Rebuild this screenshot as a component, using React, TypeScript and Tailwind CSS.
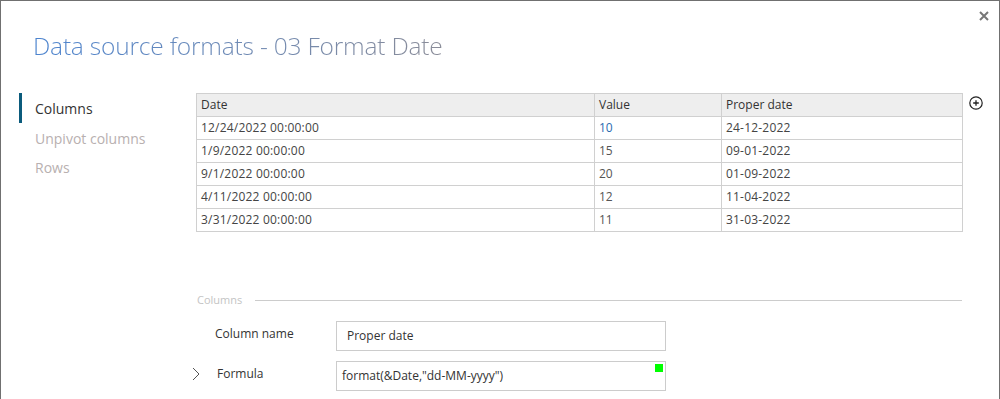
import React from "react";

const rows = [
  { date: "12/24/2022 00:00:00", value: "10", proper: "24-12-2022" },
  { date: "1/9/2022 00:00:00", value: "15", proper: "09-01-2022" },
  { date: "9/1/2022 00:00:00", value: "20", proper: "01-09-2022" },
  { date: "4/11/2022 00:00:00", value: "12", proper: "11-04-2022" },
  { date: "3/31/2022 00:00:00", value: "11", proper: "31-03-2022" },
];

const font = { fontFamily: '"Open Sans", "Noto Sans", sans-serif' };

function CloseIcon() {
  return (
    <svg width="10" height="10" viewBox="0 0 10 10" className="text-[#777]">
      <path d="M1 1 L9 9 M9 1 L1 9" stroke="currentColor" strokeWidth="2" />
    </svg>
  );
}

function PlusCircle() {
  return (
    <svg width="14" height="14" viewBox="0 0 14 14">
      <circle cx="7" cy="7" r="6.2" fill="none" stroke="#222" strokeWidth="1.2" />
      <path d="M7 4.2 V9.8 M4.2 7 H9.8" stroke="#222" strokeWidth="1.3" />
    </svg>
  );
}

function Chevron() {
  return (
    <svg width="8" height="14" viewBox="0 0 8 14">
      <path d="M1 1 L7 7 L1 13" fill="none" stroke="#555" strokeWidth="1" />
    </svg>
  );
}

export default function App() {
  return (
    <div
      className="relative w-[1000px] h-[399px] bg-white border-t border-l border-r border-[#707070] overflow-hidden text-[#333]"
      style={font}
    >
      <button className="absolute right-[10px] top-[10px]">
        <CloseIcon />
      </button>

      <div className="h-[92px] pl-[32px] pt-[28px]">
        <h1 className="text-[24.5px] leading-[34px] font-light tracking-[-0.2px] bg-gradient-to-r from-[#4c84cf] to-[#8a8c98] bg-clip-text text-transparent inline-block">
          Data source formats - 03 Format Date
        </h1>
      </div>

      <div className="flex">
        <nav className="w-[195px] pl-[18px] flex flex-col">
          <div className="flex items-center h-[30px]">
            <div className="w-[3px] h-[30px] bg-[#0b5b7c]" />
            <span className="ml-[13px] text-[14px] text-[#333]">Columns</span>
          </div>
          <span className="ml-[16px] mt-[1px] h-[30px] leading-[30px] text-[14px] text-[#b8b0b0]">
            Unpivot columns
          </span>
          <span className="ml-[16px] h-[30px] leading-[28px] text-[14px] text-[#b8b0b0]">Rows</span>
        </nav>

        <div className="flex flex-col">
          <div className="flex">
            <table className="w-[766px] border-collapse text-[12px] table-fixed">
              <colgroup>
                <col className="w-[398px]" />
                <col className="w-[127px]" />
                <col className="w-[241px]" />
              </colgroup>
              <thead>
                <tr className="bg-[#eeeeee] h-[23px]">
                  <th className="border border-[#d0d0d0] text-left font-normal px-[4px]">Date</th>
                  <th className="border border-[#d0d0d0] text-left font-normal px-[4px]">Value</th>
                  <th className="border border-[#d0d0d0] text-left font-normal px-[4px]">Proper date</th>
                </tr>
              </thead>
              <tbody>
                {rows.map((r, i) => (
                  <tr key={r.date} className="h-[23px]">
                    <td className="border border-[#d0d0d0] px-[4px] text-[#444] tracking-[0.2px]">{r.date}</td>
                    <td
                      className={
                        i === 0
                          ? "border border-[#d0d0d0] px-[4px] text-[#2a6bb0]"
                          : "border border-[#d0d0d0] px-[4px] text-[#555]"
                      }
                    >
                      {r.value}
                    </td>
                    <td className="border border-[#d0d0d0] px-[4px] text-[#444] tracking-[0.2px]">{r.proper}</td>
                  </tr>
                ))}
              </tbody>
            </table>
            <div className="ml-[6px] mt-[3px]">
              <PlusCircle />
            </div>
          </div>

          <div className="mt-[60px] flex items-center w-[766px]">
            <span className="text-[11px] text-[#c4c4c4] pl-[1px]">Columns</span>
            <div className="flex-1 ml-[13px] h-px bg-[#cccccc]" />
          </div>

          <div className="mt-[12px] flex items-center h-[30px]">
            <span className="w-[140px] pl-[19px] text-[12px] text-[#333] -mt-[4px]">Column name</span>
            <div className="w-[330px] h-[30px] border border-[#cccccc] flex items-center pl-[10px] text-[12px] text-[#333]">
              Proper date
            </div>
          </div>

          <div className="mt-[10px] flex items-center h-[30px]">
            <div className="w-[144px] flex items-center -ml-[4px] -mt-[4px]">
              <Chevron />
              <span className="ml-[17px] text-[12px] text-[#333]">Formula</span>
            </div>
            <div className="relative w-[330px] h-[30px] border border-[#cccccc] flex items-center pl-[5px] text-[12px] text-[#333]">
              format(&amp;Date,"dd-MM-yyyy")
              <span className="absolute right-[2px] top-[2px] w-[8px] h-[8px] bg-[#00ff00]" />
            </div>
          </div>
        </div>
      </div>
    </div>
  );
}
